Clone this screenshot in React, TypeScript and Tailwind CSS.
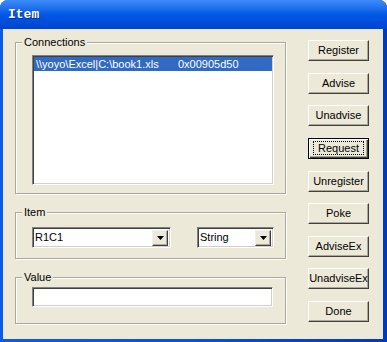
import React from "react";

const buttons = ["Register", "Advise", "Unadvise", "Request", "Unregister", "Poke", "AdviseEx", "UnadviseEx", "Done"];

const sunken =
  "bg-white border border-t-[#808080] border-l-[#808080] border-r-white border-b-white shadow-[inset_1px_1px_0_#404040,inset_-1px_-1px_0_#d4d0c8]";

function Group({ label, className, children }: { label: string; className: string; children: React.ReactNode }) {
  return (
    <div className={`relative border border-[#aca899] shadow-[1px_1px_0_white,inset_1px_1px_0_white] ${className}`}>
      {/* label sits over the top line */}
      <span className="absolute -top-[8px] left-[6px] bg-[#ece9d8] px-[2px] text-[11px] leading-[14px]">{label}</span>
      {children}
    </div>
  );
}

function Combo({ value, width }: { value: string; width: string }) {
  return (
    <div className={`${sunken} ${width} h-[21px] flex items-center justify-between pl-[2px] pr-[2px]`}>
      <span className="text-[11px] leading-none">{value}</span>
      <div className="w-[16px] h-[16px] bg-[#ece9d8] border border-t-[#f0f0f0] border-l-[#f0f0f0] border-r-[#404040] border-b-[#404040] shadow-[inset_-1px_-1px_0_#aca899] flex items-center justify-center">
        <svg width="7" height="4" viewBox="0 0 7 4">
          <path d="M0 0h7L3.5 4z" fill="black" />
        </svg>
      </div>
    </div>
  );
}

function Btn({ label }: { label: string }) {
  if (label === "Request") {
    return (
      <button className="w-[61px] h-[21px] bg-[#ece9d8] border border-black shadow-[inset_1px_1px_0_white,inset_-1px_-1px_0_#404040,inset_-2px_-2px_0_#aca899] flex items-center justify-center">
        <span className="w-[51px] h-[14px] border border-dotted border-black flex items-center justify-center text-[11px] leading-none">
          {label}
        </span>
      </button>
    );
  }
  return (
    <button className="w-[61px] h-[21px] bg-[#ece9d8] border border-t-white border-l-white border-r-[#404040] border-b-[#404040] shadow-[inset_-1px_-1px_0_#aca899] flex items-center justify-center text-[11px] leading-none whitespace-nowrap">
      {label}
    </button>
  );
}

export default function App() {
  return (
    <div
      className="w-[387px] h-[342px] flex flex-col rounded-t-[8px] bg-gradient-to-r from-[#0b5be8] via-[#0054e3] to-[#0038c0] text-black overflow-hidden"
      style={{ fontFamily: '"Liberation Sans", Arial, sans-serif' }}
    >
      {/* title bar */}
      <div className="h-[29px] shrink-0 flex items-center pl-[8px] bg-gradient-to-b from-[#3d8cf8] via-[#0058e6] to-[#0044d0]">
        <span
          className="text-white font-bold text-[13px] leading-none [text-shadow:1px_1px_0_#0a2a80]"
          style={{ fontFamily: '"Liberation Mono", "DejaVu Sans Mono", monospace' }}
        >
          Item
        </span>
      </div>

      {/* dialog body */}
      <div className="flex-1 ml-[3px] mr-[4px] mb-[3px] bg-[#ece9d8] flex pl-[12px] pt-[11px]">
        <div className="w-[271px] mt-[2px] flex flex-col gap-[18px]">
          <Group label="Connections" className="h-[152px] pl-[16px] pt-[12px]">
            <div className={`${sunken} w-[242px] h-[130px] p-[1px]`}>
              <div className="h-[14px] bg-[#316ac5] text-white text-[11px] leading-[14px] flex pl-[2px]">
                <span className="w-[142px]">\\yoyo\Excel|C:\book1.xls</span>
                <span>0x00905d50</span>
              </div>
            </div>
          </Group>
          <Group label="Item" className="h-[47px] pl-[16px] pt-[14px]">
            <div className="flex gap-[26px]">
              <Combo value="R1C1" width="w-[139px]" />
              <Combo value="String" width="w-[77px]" />
            </div>
          </Group>
          <Group label="Value" className="h-[47px] pl-[16px] pt-[9px]">
            <div className={`${sunken} w-[241px] h-[20px]`} />
          </Group>
        </div>
        <div className="ml-[22px] h-[282px] flex flex-col justify-between">
          {buttons.map((b) => (
            <Btn key={b} label={b} />
          ))}
        </div>
      </div>
    </div>
  );
}
